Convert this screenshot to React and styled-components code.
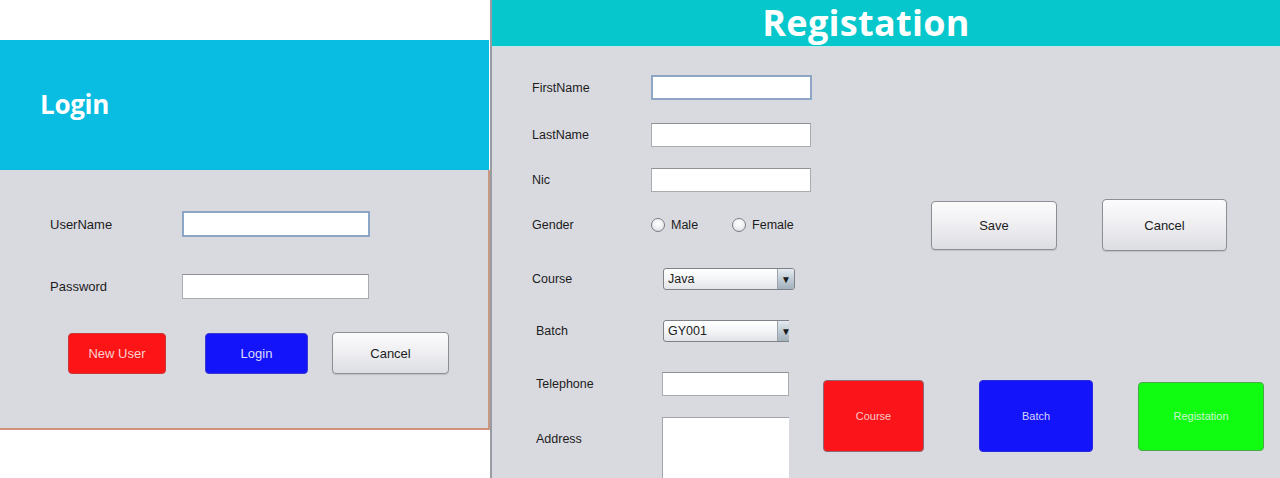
import React from 'react';
import styled, { createGlobalStyle } from 'styled-components';

const GlobalStyle = createGlobalStyle`
  html, body {
    margin: 0;
    padding: 0;
    background: #ffffff;
    font-family: 'Liberation Sans', Arial, sans-serif;
    color: #1c1c1c;
  }
  #root {
    width: 1280px;
    height: 478px;
    overflow: hidden;
  }
`;

const Screen = styled.div`
  display: flex;
  width: 1280px;
  height: 478px;
  overflow: hidden;
`;

/* Login window */
const LoginWindow = styled.div`
  width: 490px;
  display: flex;
  flex-direction: column;
  flex-shrink: 0;
  background: #ffffff;
`;

const TopGap = styled.div`
  height: 40px;
  flex-shrink: 0;
`;

const LoginHeader = styled.div`
  height: 130px;
  flex-shrink: 0;
  margin-right: 1px;
  background: #08bde1;
  display: flex;
  align-items: center;
  padding-left: 40px;
  box-sizing: border-box;
`;

const LoginTitle = styled.h1`
  margin: 0 0 2px;
  font-family: 'Open Sans', 'Noto Sans', sans-serif;
  font-weight: 700;
  font-size: 26px;
  color: #ffffff;
  letter-spacing: -0.3px;
`;

const LoginBody = styled.div`
  height: 260px;
  flex-shrink: 0;
  box-sizing: border-box;
  background: #d9dae0;
  border-bottom: 2px solid #d39079;
  border-right: 2px solid #c99883;
  padding-top: 41px;
  display: flex;
  flex-direction: column;
`;

const LoginRow = styled.div`
  display: flex;
  align-items: center;
  padding-left: 50px;
  margin-top: ${p => p.$top || 0}px;
`;

const LoginLabel = styled.span`
  width: 132px;
  font-size: 13px;
`;

const TextField = styled.div`
  box-sizing: border-box;
  width: ${p => p.$w}px;
  height: ${p => p.$h}px;
  background: #ffffff;
  border: ${p => (p.$focused ? '2px solid #8ea6c6' : '1px solid #a9abb0')};
  border-top-color: ${p => (p.$focused ? '#8ea6c6' : '#8f9196')};
`;

const ButtonRow = styled.div`
  display: flex;
  align-items: center;
  padding-left: ${p => p.$left || 0}px;
  margin-top: ${p => p.$top || 0}px;
`;

const ColorButton = styled.button`
  box-sizing: border-box;
  width: ${p => p.$w}px;
  height: ${p => p.$h}px;
  margin-left: ${p => p.$ml || 0}px;
  background: ${p => p.$bg};
  color: ${p => p.$fg};
  border: 1px solid ${p => p.$border};
  border-radius: 4px;
  font-family: 'Liberation Sans', Arial, sans-serif;
  font-size: ${p => p.$fs || 13}px;
  padding: 0;
`;

const PlainButton = styled.button`
  box-sizing: border-box;
  width: ${p => p.$w}px;
  height: ${p => p.$h}px;
  margin-left: ${p => p.$ml || 0}px;
  background: linear-gradient(#fbfbfc 0%, #f0f0f3 45%, #dcdde2 100%);
  border: 1px solid #8d8f94;
  border-radius: 4px;
  color: #1c1c1c;
  font-family: 'Liberation Sans', Arial, sans-serif;
  font-size: 13px;
  padding: 0;
  box-shadow: 0 1px 1px rgba(0, 0, 0, 0.12);
`;

const Divider = styled.div`
  width: 2px;
  flex-shrink: 0;
  background: #979ba2;
`;

/* Registration window */
const RegWindow = styled.div`
  flex: 1;
  display: flex;
  flex-direction: column;
  background: #d9dae0;
  overflow: hidden;
`;

const RegHeader = styled.div`
  height: 46px;
  flex-shrink: 0;
  background: #06c7cb;
  border-bottom: 1px solid #c2e6e8;
  display: flex;
  align-items: center;
  justify-content: center;
  padding-right: 40px;
`;

const RegTitle = styled.h1`
  margin: 0;
  font-family: 'Open Sans', 'Noto Sans', sans-serif;
  font-weight: 700;
  font-size: 36px;
  color: #ffffff;
  line-height: 46px;
  letter-spacing: 0.3px;
`;

const RegBody = styled.div`
  flex: 1;
  display: flex;
`;

const FormColumn = styled.div`
  width: 331px;
  flex-shrink: 0;
  padding-top: 28px;
  padding-left: 40px;
  box-sizing: border-box;
  display: flex;
  flex-direction: column;
`;

const FormRow = styled.div`
  display: flex;
  align-items: ${p => (p.$top ? 'flex-start' : 'center')};
  margin-top: ${p => p.$mt || 0}px;
`;

const FormLabel = styled.span`
  width: ${p => 119 - (p.$indent || 0)}px;
  padding-left: ${p => p.$indent || 0}px;
  padding-top: ${p => p.$pt || 0}px;
  font-size: 12.5px;
`;

const RadioGroup = styled.div`
  display: flex;
  align-items: center;
  height: 20px;
`;

const Radio = styled.span`
  box-sizing: border-box;
  width: 14px;
  height: 14px;
  border-radius: 50%;
  border: 1px solid #7b7d82;
  background: radial-gradient(circle at 50% 35%, #ffffff 0%, #eceef2 55%, #c9cbd0 100%);
  margin-left: ${p => p.$ml || 0}px;
`;

const RadioText = styled.span`
  font-size: 12.5px;
  margin-left: 6px;
`;

const Combo = styled.div`
  box-sizing: border-box;
  display: flex;
  align-items: stretch;
  width: ${p => p.$w}px;
  height: 22px;
  margin-left: ${p => p.$ml || 0}px;
  overflow: hidden;
`;

const ComboInner = styled.div`
  box-sizing: border-box;
  flex-shrink: 0;
  width: 132px;
  display: flex;
  border: 1px solid #7e8187;
  border-radius: 3px;
  background: linear-gradient(#ffffff 0%, #f4f5f7 50%, #e1e3e8 100%);
`;

const ComboText = styled.span`
  flex: 1;
  font-size: 12.5px;
  line-height: 20px;
  padding-left: 4px;
`;

const ComboArrow = styled.span`
  width: 16px;
  border-left: 1px solid #9ea3aa;
  background: linear-gradient(#e4ebf1 0%, #c0ccd6 50%, #a3b1bd 100%);
  border-radius: 0 2px 2px 0;
  display: flex;
  align-items: center;
  justify-content: center;
  font-size: 10px;
  color: #1a1a1a;
`;

const AddressBox = styled.div`
  box-sizing: border-box;
  width: 127px;
  height: 70px;
  margin-left: 11px;
  background: #ffffff;
  border: 1px solid #a3a5aa;
  border-right: none;
`;

const ActionColumn = styled.div`
  flex: 1;
  display: flex;
  flex-direction: column;
`;

const Field = ({ w, h, focused, ml }) => (
  <TextField $w={w} $h={h} $focused={focused} style={ml ? { marginLeft: ml } : undefined} />
);

const Select = ({ value, w, ml }) => (
  <Combo $w={w} $ml={ml}>
    <ComboInner>
      <ComboText>{value}</ComboText>
      <ComboArrow>▼</ComboArrow>
    </ComboInner>
  </Combo>
);

const App = () => (
  <>
    <GlobalStyle />
    <Screen>
      <LoginWindow>
        <TopGap />
        <LoginHeader>
          <LoginTitle>Login</LoginTitle>
        </LoginHeader>
        <LoginBody>
          <LoginRow>
            <LoginLabel>UserName</LoginLabel>
            <Field w={188} h={26} focused />
          </LoginRow>
          <LoginRow $top={37}>
            <LoginLabel>Password</LoginLabel>
            <Field w={187} h={25} />
          </LoginRow>
          <ButtonRow $left={68} $top={33}>
            <ColorButton $w={98} $h={41} $bg="#fc1416" $fg="#f9d2d2" $border="#c8383a">New User</ColorButton>
            <ColorButton $w={103} $h={41} $ml={39} $bg="#1414fb" $fg="#dcdcff" $border="#3a3ad0">Login</ColorButton>
            <PlainButton $w={117} $h={42} $ml={24}>Cancel</PlainButton>
          </ButtonRow>
        </LoginBody>
      </LoginWindow>

      <Divider />

      <RegWindow>
        <RegHeader>
          <RegTitle>Registation</RegTitle>
        </RegHeader>
        <RegBody>
          <FormColumn>
            <FormRow>
              <FormLabel>FirstName</FormLabel>
              <Field w={161} h={25} focused />
            </FormRow>
            <FormRow $mt={23}>
              <FormLabel>LastName</FormLabel>
              <Field w={160} h={24} />
            </FormRow>
            <FormRow $mt={21}>
              <FormLabel>Nic</FormLabel>
              <Field w={160} h={24} />
            </FormRow>
            <FormRow $mt={23}>
              <FormLabel>Gender</FormLabel>
              <RadioGroup>
                <Radio />
                <RadioText>Male</RadioText>
                <Radio $ml={34} />
                <RadioText>Female</RadioText>
              </RadioGroup>
            </FormRow>
            <FormRow $mt={33}>
              <FormLabel>Course</FormLabel>
              <Select value="Java" w={132} ml={12} />
            </FormRow>
            <FormRow $mt={30}>
              <FormLabel $indent={4}>Batch</FormLabel>
              <Select value="GY001" w={126} ml={12} />
            </FormRow>
            <FormRow $mt={30}>
              <FormLabel $indent={4}>Telephone</FormLabel>
              <Field w={127} h={24} ml={11} />
            </FormRow>
            <FormRow $mt={21} $top>
              <FormLabel $indent={4} $pt={15}>Address</FormLabel>
              <AddressBox />
            </FormRow>
          </FormColumn>

          <ActionColumn>
            <ButtonRow $left={108} $top={152}>
              <PlainButton $w={126} $h={49}>Save</PlainButton>
              <PlainButton $w={125} $h={52} $ml={45}>Cancel</PlainButton>
            </ButtonRow>
            <ButtonRow $top={129}>
              <ColorButton $w={101} $h={72} $fs={11} $bg="#fb1419" $fg="#f7c9ca" $border="#8c6a74">Course</ColorButton>
              <ColorButton $w={114} $h={72} $ml={55} $fs={11} $bg="#1414fb" $fg="#d4d4ff" $border="#2a2ae0">Batch</ColorButton>
              <ColorButton $w={126} $h={69} $ml={45} $fs={11} $bg="#10fd12" $fg="#c9f7c9" $border="#4aa64a">Registation</ColorButton>
            </ButtonRow>
          </ActionColumn>
        </RegBody>
      </RegWindow>
    </Screen>
  </>
);

export default App;
